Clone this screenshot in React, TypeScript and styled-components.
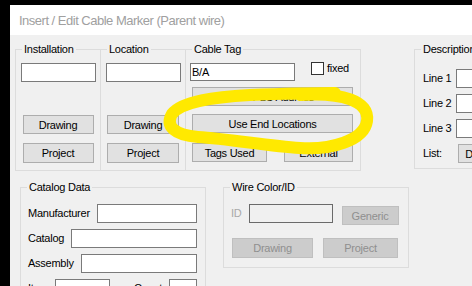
import styled, { createGlobalStyle } from "styled-components";

const GlobalStyle = createGlobalStyle`
  html, body {
    margin: 0;
    padding: 0;
    background: #000;
    overflow: hidden;
  }
  body {
    font-family: "Liberation Sans", Arial, sans-serif;
    font-size: 11px;
    letter-spacing: -0.25px;
  }
  * {
    box-sizing: border-box;
  }
`;

const Screen = styled.div`
  position: relative;
  width: 472px;
  height: 286px;
  overflow: hidden;
  background: #000;
  padding: 5px 0 0 10px;
`;

const Window = styled.div`
  width: 500px;
  height: 320px;
  background: #f0f0f0;
  display: flex;
  flex-direction: column;
`;

const TitleBar = styled.div`
  height: 30px;
  flex-shrink: 0;
  background: #fff;
  display: flex;
  align-items: center;
  padding-left: 9px;
  font-size: 13px;
  letter-spacing: -0.5px;
  color: #a0a0a0;
`;

const Body = styled.div`
  padding: 8px 0 0 5px;
  display: flex;
  flex-direction: column;
  gap: 10px;
`;

const Row = styled.div<{ $pl?: number; $gap?: number }>`
  display: flex;
  align-items: flex-start;
  padding-left: ${(p) => p.$pl ?? 0}px;
  gap: ${(p) => p.$gap ?? 0}px;
`;

const Group = styled.fieldset<{ $w: number; $h: number; $ml?: number }>`
  display: flex;
  flex-direction: column;
  margin: 0 0 0 ${(p) => p.$ml ?? 0}px;
  width: ${(p) => p.$w}px;
  height: ${(p) => p.$h}px;
  flex-shrink: 0;
  border: 1px solid #dcdcdc;
  padding: 0;
  min-width: 0;
`;

const Legend = styled.legend`
  margin-left: 6px;
  padding: 0 2px;
  line-height: 13px;
  font-size: 11px;
  color: #000;
`;

const SideCol = styled.div`
  flex: 1;
  display: flex;
  flex-direction: column;
  align-items: center;
  gap: 9px;
  padding: 7px 0 7px;
`;

const TextBox = styled.input<{ $w?: number; $h?: number }>`
  width: ${(p) => (p.$w ? `${p.$w}px` : "auto")};
  flex: ${(p) => (p.$w ? "none" : "1")};
  min-width: 0;
  height: ${(p) => p.$h ?? 19}px;
  margin: 0;
  padding: 0 1px;
  border: 1px solid #7a7a7a;
  background: #fff;
  font: inherit;
  letter-spacing: inherit;
  color: #000;
  outline: none;
  &:disabled {
    background: #f0f0f0;
    border-color: #6a6a6a;
  }
`;

const Btn = styled.button<{ $w: number; $h?: number; $mt?: number; $ml?: number }>`
  width: ${(p) => p.$w}px;
  height: ${(p) => p.$h ?? 19}px;
  flex-shrink: 0;
  margin: ${(p) => p.$mt ?? 0}px 0 0 ${(p) => p.$ml ?? 0}px;
  padding: 0;
  background: #e1e1e1;
  border: 1px solid #adadad;
  font: inherit;
  letter-spacing: inherit;
  color: #000;
  white-space: nowrap;
  overflow: hidden;
  &:disabled {
    background: #cccccc;
    border-color: #bfbfbf;
    color: #8f8f8f;
  }
`;

const PushDown = styled.div`
  margin-top: auto;
`;

const TagCol = styled.div`
  flex: 1;
  display: flex;
  flex-direction: column;
  padding: 7px 0 0 4px;
`;

const CheckBox = styled.span`
  width: 13px;
  height: 13px;
  margin: -1px 0 0 16px;
  border: 1px solid #333;
  background: #fff;
  flex-shrink: 0;
`;

const CheckText = styled.span`
  margin: -2px 0 0 3px;
  line-height: 15px;
`;

const BtnPair = styled.div`
  width: 161px;
  margin: 10px 0 0 2px;
  display: flex;
  justify-content: space-between;
`;

const DescGrid = styled.div`
  display: grid;
  grid-template-columns: 33px 1fr;
  row-gap: 6px;
  align-items: center;
  padding: 13px 0 0 8px;
`;

const Label = styled.span<{ $off?: boolean }>`
  color: ${(p) => (p.$off ? "#a9a9a9" : "#000")};
  white-space: nowrap;
  line-height: 19px;
`;

const FormCol = styled.div`
  display: flex;
  flex-direction: column;
  gap: 6px;
  padding: 10px 8px 0 7px;
`;

const FieldRow = styled.div`
  display: flex;
  align-items: center;
  gap: 7px;
`;

const CountLabel = styled(Label)`
  margin-left: auto;
`;

const WireCol = styled.div`
  display: flex;
  flex-direction: column;
  padding: 10px 0 0 7px;
`;

const Overlay = styled.svg`
  position: absolute;
  left: 0;
  top: 0;
  pointer-events: none;
`;

export default function App() {
  return (
    <>
      <GlobalStyle />
      <Screen>
        <Window>
          <TitleBar>Insert / Edit Cable Marker (Parent wire)</TitleBar>
          <Body>
            <Row>
              <Group $w={86} $h={128}>
                <Legend>Installation</Legend>
                <SideCol>
                  <TextBox $w={75} />
                  <PushDown />
                  <Btn $w={71}>Drawing</Btn>
                  <Btn $w={71} $h={20}>Project</Btn>
                </SideCol>
              </Group>
              <Group $w={86} $h={128} $ml={-1}>
                <Legend>Location</Legend>
                <SideCol>
                  <TextBox $w={75} />
                  <PushDown />
                  <Btn $w={72}>Drawing</Btn>
                  <Btn $w={72} $h={20}>Project</Btn>
                </SideCol>
              </Group>
              <Group $w={176} $h={128} $ml={-1}>
                <Legend>Cable Tag</Legend>
                <TagCol>
                  <Row>
                    <TextBox $w={105} $h={18} defaultValue="B/A" />
                    <CheckBox />
                    <CheckText>fixed</CheckText>
                  </Row>
                  <Btn $w={161} $mt={6} $ml={2}>Use PLC Address</Btn>
                  <Btn $w={161} $mt={8} $ml={2}>Use End Locations</Btn>
                  <BtnPair>
                    <Btn $w={75}>Tags Used</Btn>
                    <Btn $w={69}>External</Btn>
                  </BtnPair>
                </TagCol>
              </Group>
              <Group $w={120} $h={126} $ml={53}>
                <Legend>Description</Legend>
                <DescGrid>
                  <Label>Line 1</Label>
                  <TextBox />
                  <Label>Line 2</Label>
                  <TextBox />
                  <Label>Line 3</Label>
                  <TextBox />
                  <Label>List:</Label>
                  <Btn $w={53} $ml={2}>Drawing</Btn>
                </DescGrid>
              </Group>
            </Row>
            <Row $pl={5} $gap={17}>
              <Group $w={186} $h={130}>
                <Legend>Catalog Data</Legend>
                <FormCol>
                  <FieldRow>
                    <Label>Manufacturer</Label>
                    <TextBox />
                  </FieldRow>
                  <FieldRow>
                    <Label>Catalog</Label>
                    <TextBox />
                  </FieldRow>
                  <FieldRow>
                    <Label>Assembly</Label>
                    <TextBox />
                  </FieldRow>
                  <FieldRow>
                    <Label>Item</Label>
                    <TextBox $w={55} />
                    <CountLabel>Count</CountLabel>
                    <TextBox $w={28} />
                  </FieldRow>
                </FormCol>
              </Group>
              <Group $w={186} $h={87}>
                <Legend>Wire Color/ID</Legend>
                <WireCol>
                  <Row>
                    <Label $off>ID</Label>
                    <TextBox $w={84} disabled style={{ marginLeft: 7 }} />
                    <Btn $w={57} $mt={2} $ml={9} disabled>
                      Generic
                    </Btn>
                  </Row>
                  <Row>
                    <Btn $w={81} $h={20} $mt={13} $ml={1} disabled>
                      Drawing
                    </Btn>
                    <Btn $w={75} $h={20} $mt={13} $ml={10} disabled>
                      Project
                    </Btn>
                  </Row>
                </WireCol>
              </Group>
            </Row>
          </Body>
        </Window>
        <Overlay width={472} height={286} viewBox="0 0 472 286">
          <path
            d="M 300 95 C 342 92, 370 101, 367 121 C 364 141, 330 150, 300 148 C 268 146, 230 139, 198 137 C 174 135, 165 126, 172 114 C 182 101, 215 97, 250 95 C 275 94, 300 93, 335 93"
            fill="none"
            stroke="#ffe900"
            strokeWidth={12}
            strokeLinecap="round"
            strokeLinejoin="round"
          />
        </Overlay>
      </Screen>
    </>
  );
}
